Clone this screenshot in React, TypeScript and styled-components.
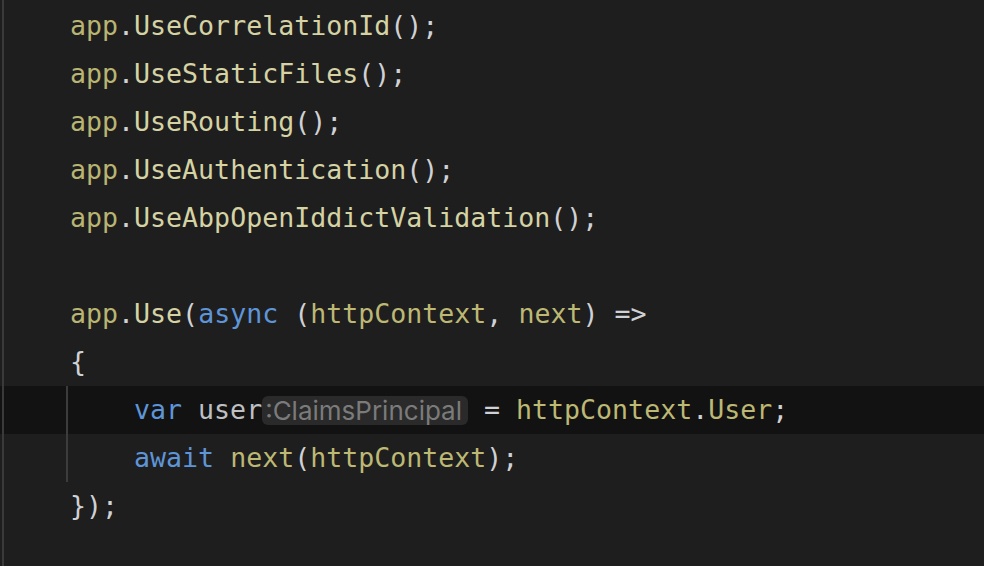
import React from "react";
import styled, { createGlobalStyle } from "styled-components";

const Global = createGlobalStyle`
  html, body { margin: 0; padding: 0; background: #1e1e1e; }
  body { width: 984px; height: 566px; overflow: hidden; }
`;

type Kind = "recv" | "method" | "punct" | "kw" | "param" | "local";

const colors: Record<Kind, string> = {
  recv: "#b9b472",
  method: "#d5d2a4",
  punct: "#d0d1d4",
  kw: "#5e95d8",
  param: "#bdb874",
  local: "#bfc0c4",
};

const Editor = styled.div`
  position: relative;
  width: 984px;
  height: 566px;
  background: #1e1e1e;
  padding-top: 2px;
  box-sizing: border-box;
  font-family: "DejaVu Sans Mono", "Liberation Mono", monospace;
  font-size: 26.6px;
  overflow: hidden;
  &::after {
    content: "";
    position: absolute;
    left: 2px;
    top: 0;
    bottom: 0;
    width: 1.5px;
    background: #3a3a3a;
  }
`;

const Line = styled.div<{ $active?: boolean; $guide?: boolean }>`
  position: relative;
  height: 48px;
  line-height: 48px;
  padding-left: 70px;
  white-space: pre;
  display: flex;
  align-items: center;
  background: ${(p) => (p.$active ? "#121212" : "transparent")};
  &::before {
    content: "";
    display: ${(p) => (p.$guide ? "block" : "none")};
    position: absolute;
    left: 66px;
    top: 0;
    bottom: 0;
    width: 1.5px;
    background: #3c3c3c;
  }
`;

const T = styled.span<{ $k: Kind }>`
  color: ${(p) => colors[p.$k]};
`;

const Hint = styled.span`
  display: inline-flex;
  align-items: center;
  height: 29px;
  padding: 0 6px 0 3px;
  border-radius: 6px;
  background: #2a2a2a;
  color: #7b7b7b;
  font-family: "Inter", "Noto Sans", sans-serif;
  font-size: 26px;
  line-height: 29px;
`;

type Tok = [Kind, string];

const useLine = (name: string): Tok[] => [
  ["recv", "app"],
  ["punct", "."],
  ["method", name],
  ["punct", "();"],
];

const Tokens: React.FC<{ toks: Tok[] }> = ({ toks }) => (
  <>
    {toks.map(([k, s], i) => (
      <T key={i} $k={k}>
        {s}
      </T>
    ))}
  </>
);

export default function App() {
  return (
    <>
      <Global />
      <Editor>
        <Line><Tokens toks={useLine("UseCorrelationId")} /></Line>
        <Line><Tokens toks={useLine("UseStaticFiles")} /></Line>
        <Line><Tokens toks={useLine("UseRouting")} /></Line>
        <Line><Tokens toks={useLine("UseAuthentication")} /></Line>
        <Line><Tokens toks={useLine("UseAbpOpenIddictValidation")} /></Line>
        <Line />
        <Line>
          <Tokens
            toks={[
              ["recv", "app"],
              ["punct", "."],
              ["method", "Use"],
              ["punct", "("],
              ["kw", "async"],
              ["punct", " ("],
              ["param", "httpContext"],
              ["punct", ", "],
              ["param", "next"],
              ["punct", ") =>"],
            ]}
          />
        </Line>
        <Line><T $k="punct">{"{"}</T></Line>
        <Line $active $guide>
          <Tokens toks={[["kw", "    var"], ["punct", " "], ["local", "user"]]} />
          <Hint>:ClaimsPrincipal</Hint>
          <Tokens
            toks={[
              ["punct", " = "],
              ["param", "httpContext"],
              ["punct", "."],
              ["param", "User"],
              ["punct", ";"],
            ]}
          />
        </Line>
        <Line $guide>
          <Tokens
            toks={[
              ["kw", "    await"],
              ["punct", " "],
              ["param", "next"],
              ["punct", "("],
              ["param", "httpContext"],
              ["punct", ");"],
            ]}
          />
        </Line>
        <Line><T $k="punct">{"});"}</T></Line>
      </Editor>
    </>
  );
}
